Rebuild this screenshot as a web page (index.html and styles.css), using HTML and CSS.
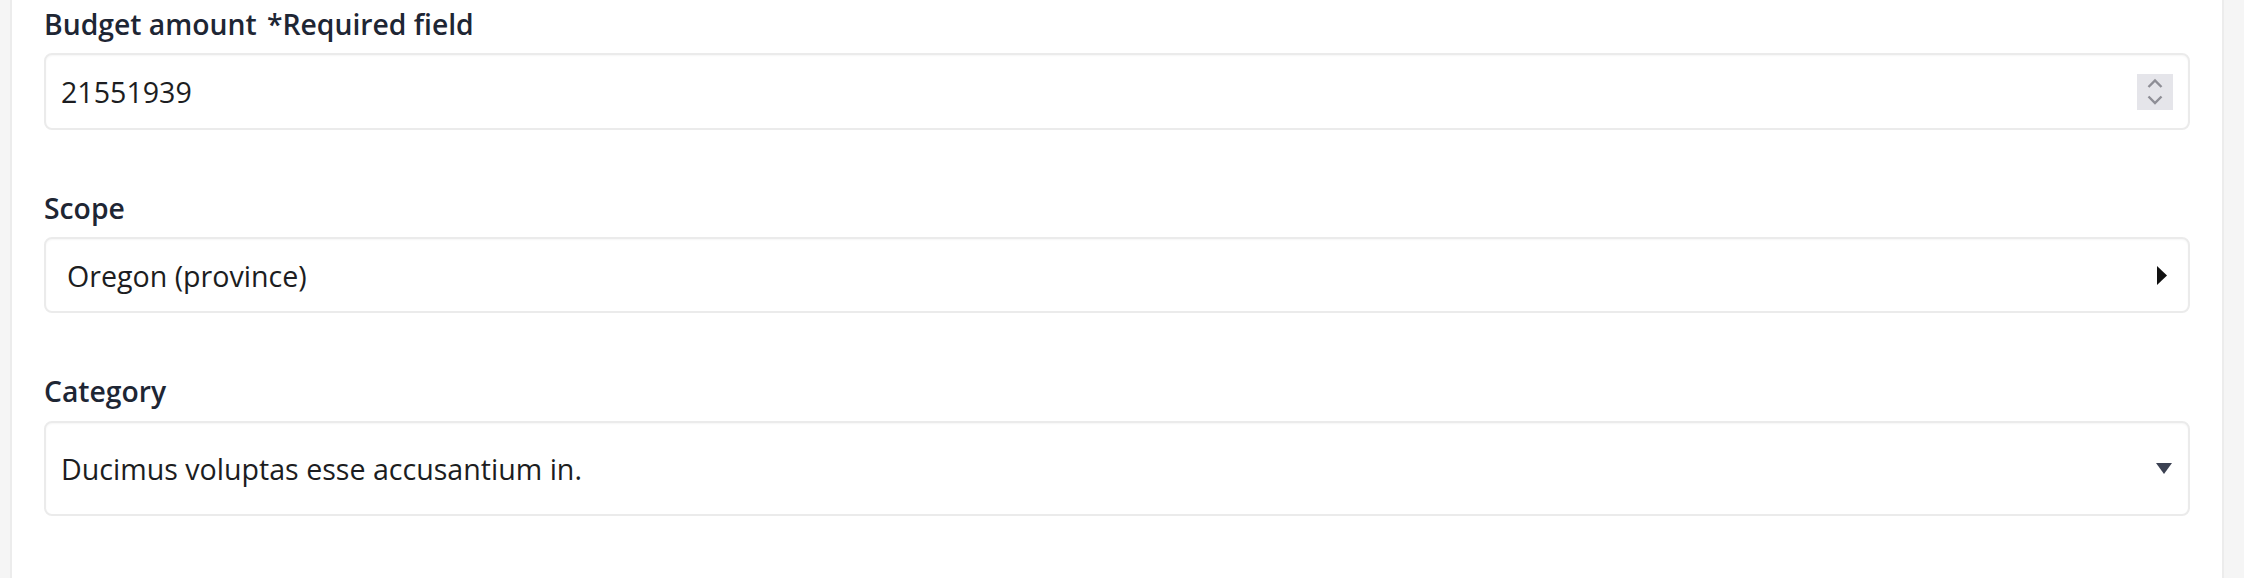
FILE: index.html
```html
<!DOCTYPE html>
<html lang="en">
<head>
<meta charset="utf-8">
<title>Budget form</title>
<link rel="stylesheet" href="styles.css">
</head>
<body>
<div class="page">
  <div class="panel">
    <form class="form">
      <div class="field">
        <div class="label">Budget amount <span class="req">*Required field</span></div>
        <div class="control control-number">
          <span class="value">21551939</span>
          <span class="spinner">
            <svg width="36" height="36" viewBox="0 0 36 36" aria-hidden="true">
              <polyline points="11.5,13 18,6.5 24.5,13" fill="none" stroke="#8e8e96" stroke-width="2.4"/>
              <polyline points="11.5,22.5 18,29 24.5,22.5" fill="none" stroke="#8e8e96" stroke-width="2.4"/>
            </svg>
          </span>
        </div>
      </div>
      <div class="field">
        <div class="label">Scope</div>
        <div class="control control-scope">
          <span class="value">Oregon (province)</span>
          <svg class="arrow-right" width="10" height="19" viewBox="0 0 10 19" aria-hidden="true">
            <polygon points="0,0 10,9.5 0,19" fill="#111111"/>
          </svg>
        </div>
      </div>
      <div class="field field-category">
        <div class="label">Category</div>
        <div class="control control-select">
          <span class="value">Ducimus voluptas esse accusantium in.</span>
          <svg class="arrow-down" width="16" height="11" viewBox="0 0 16 11" aria-hidden="true">
            <polygon points="0,0 16,0 8,11" fill="#3b4152"/>
          </svg>
        </div>
      </div>
    </form>
  </div>
</div>
</body>
</html>
```
FILE: styles.css
```css
html, body {
  margin: 0;
  padding: 0;
  background: #f5f5f5;
}

body {
  font-family: "Open Sans", "Noto Sans", sans-serif;
}

.page {
  min-height: 100vh;
  padding: 0 20px 0 10px;
  box-sizing: border-box;
  display: flex;
}

.panel {
  flex: 1;
  background: #ffffff;
  border-left: 2px solid #ececec;
  border-right: 2px solid #ececec;
  padding: 6px 32px 0 32px;
  min-height: 100vh;
  box-sizing: border-box;
}

.form {
  display: flex;
  flex-direction: column;
  gap: 60px;
}

.field {
  display: flex;
  flex-direction: column;
  gap: 11px;
}

.field-category {
  gap: 12px;
}

.label {
  font-size: 28.3px;
  line-height: 36px;
  font-weight: 600;
  color: #1e2634;
  white-space: nowrap;
}

.req {
  margin-left: 3px;
}

.control {
  box-sizing: border-box;
  display: flex;
  align-items: center;
  justify-content: space-between;
  border: 2px solid #ebebeb;
  border-radius: 8px;
  background: #ffffff;
  box-shadow: inset 0 1px 2px rgba(0, 0, 0, 0.04);
  font-size: 28.6px;
  color: #1c1d21;
}

.value {
  white-space: nowrap;
}

.control-number {
  height: 77px;
  padding: 0 15px 0 15px;
}

.spinner {
  width: 36px;
  height: 36px;
  background: #e5e5ea;
  display: flex;
}

.control-scope {
  height: 76px;
  padding: 0 21px 0 21px;
}

.control-select {
  height: 95px;
  padding: 0 16px 0 15px;
}

.arrow-right,
.arrow-down {
  display: block;
  flex: none;
}
```
